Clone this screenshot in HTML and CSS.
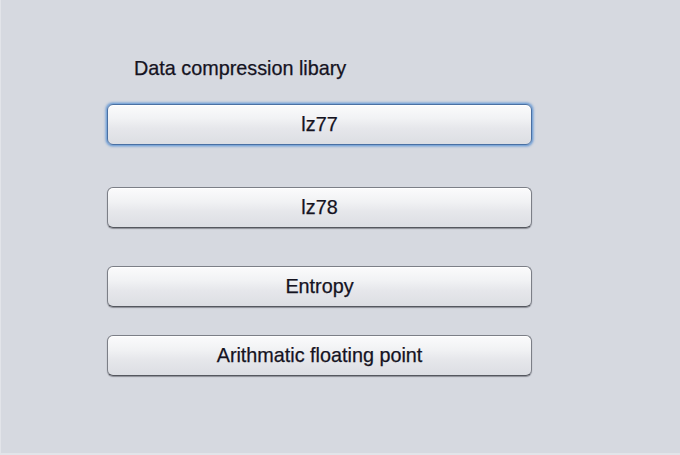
FILE: index.html
```html
<!DOCTYPE html>
<html>
<head>
<meta charset="utf-8">
<title>Data compression libary</title>
<link rel="stylesheet" href="styles.css">
</head>
<body>
<div class="frame">
  <div class="panel">
    <div class="title">Data compression libary</div>
    <button class="btn btn-focus">lz77</button>
    <button class="btn btn-2">lz78</button>
    <button class="btn btn-3">Entropy</button>
    <button class="btn btn-4">Arithmatic floating point</button>
  </div>
</div>
</body>
</html>
```

FILE: styles.css
```css
html, body {
  margin: 0;
  padding: 0;
  width: 680px;
  height: 455px;
  overflow: hidden;
  background: #d6d9e0;
}

.frame {
  box-sizing: border-box;
  width: 680px;
  height: 455px;
  border-left: 1px solid #e2e4e9;
  border-bottom: 2px solid #e2e4e9;
  background: #d6d9e0;
}

.panel {
  display: flex;
  flex-direction: column;
  align-items: flex-start;
  padding: 57px 0 0 106px;
  font-family: "Liberation Sans", Arial, sans-serif;
  color: #1a1a28;
}

.title {
  font-size: 19.8px;
  line-height: 22px;
  height: 22px;
  margin-left: 27px;
  margin-bottom: 25px;
  color: #15131f;
  -webkit-text-stroke: 0.25px #15131f;
}

.btn {
  box-sizing: border-box;
  width: 425px;
  height: 41px;
  margin: 0;
  padding: 0 0 1px 0;
  border: 1px solid #7c7f87;
  border-bottom-color: #55585f;
  border-radius: 6px;
  background: linear-gradient(to bottom, #fbfbfc 0%, #f1f2f4 35%, #e6e7eb 60%, #dcdee3 100%);
  box-shadow: inset 0 1px 0 #ffffff, 0 1px 1px rgba(50, 50, 60, 0.45);
  font-family: "Liberation Sans", Arial, sans-serif;
  font-size: 19.8px;
  line-height: 22px;
  color: #15131f;
  -webkit-text-stroke: 0.25px #15131f;
  text-align: center;
  cursor: pointer;
}

.btn-focus {
  border-color: #4a70a3;
  box-shadow: 0 0 0 1px #7fa8d8, 0 0 2px 2px rgba(100, 150, 210, 0.6), inset 0 1px 0 #ffffff;
}

.btn-2 {
  margin-top: 42px;
}

.btn-3 {
  margin-top: 38px;
}

.btn-4 {
  margin-top: 28px;
}
```
